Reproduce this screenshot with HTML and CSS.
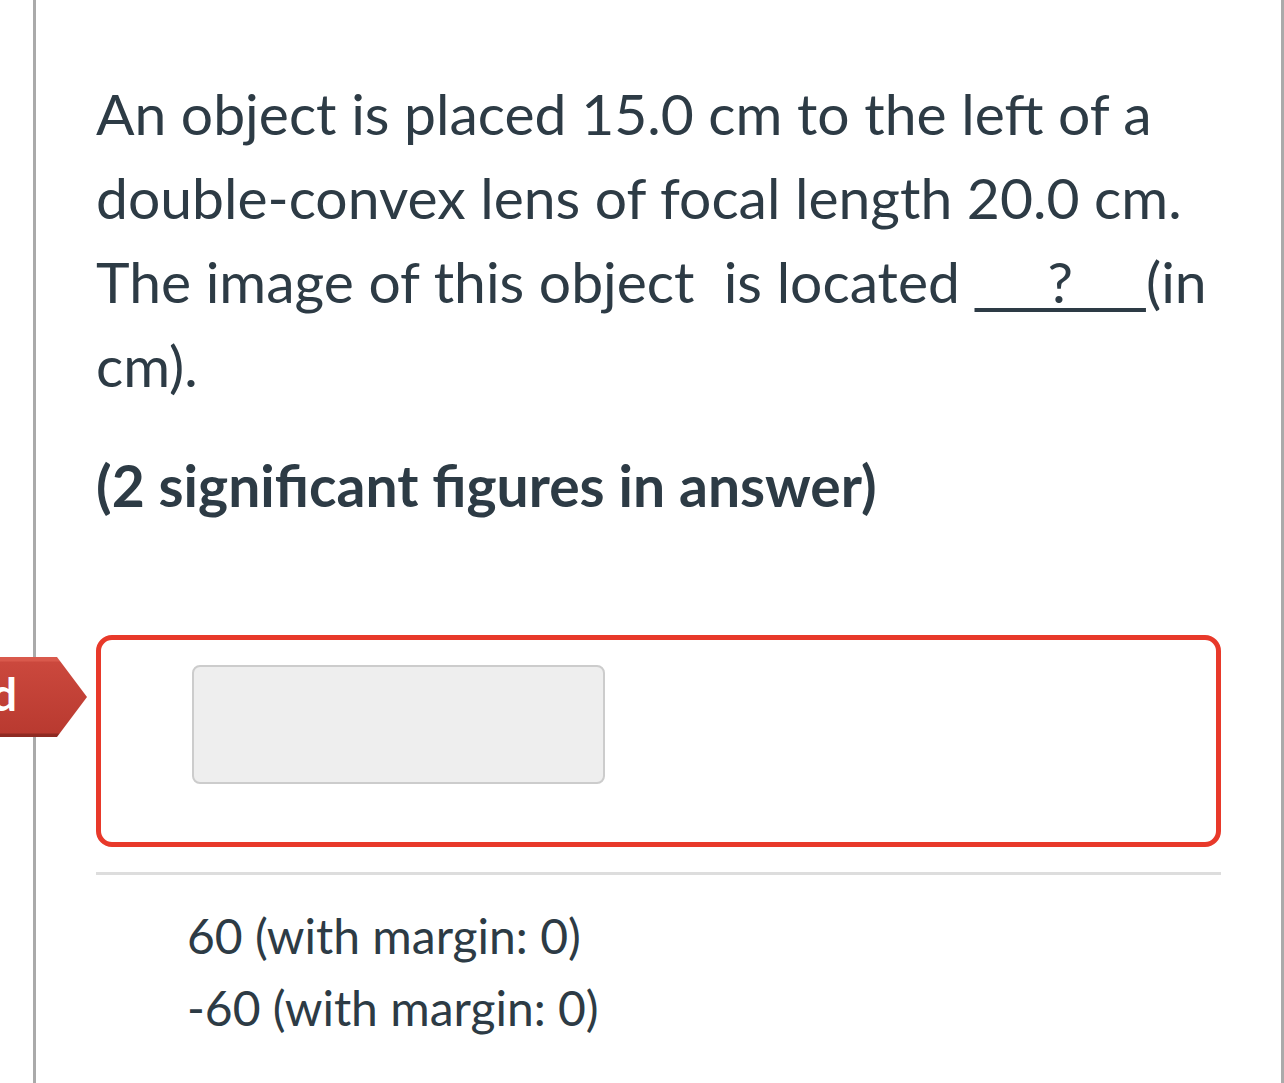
FILE: index.html
```html
<!DOCTYPE html>
<html>
<head>
<meta charset="utf-8">
<link rel="stylesheet" href="styles.css">
</head>
<body>
<div class="page">
  <div class="flag"><span class="flag-text">d</span></div>
  <div class="question">
    <p class="q-text">An object is placed 15.0 cm to the left of a double-convex lens of focal length 20.0 cm. The image of this object&nbsp; is located <span class="blank">&nbsp;&nbsp;&nbsp;&nbsp;&nbsp;?&nbsp;&nbsp;&nbsp;&nbsp;&nbsp;</span>(in cm).</p>
    <p class="q-note">(2 significant figures in answer)</p>
    <div class="answer-box">
      <div class="answer-input"></div>
    </div>
    <div class="divider"></div>
    <div class="answers">
      <div class="ans">60 (with margin: 0)</div>
      <div class="ans">-60 (with margin: 0)</div>
    </div>
  </div>
</div>
</body>
</html>
```
FILE: styles.css
```css
html, body {
  margin: 0;
  padding: 0;
  background: #fff;
}
body {
  font-family: Lato, "Open Sans", sans-serif;
  color: #2d3b45;
  overflow: hidden;
}
.page {
  position: relative;
  margin-left: 33px;
  width: 1245px;
  height: 1083px;
  border-left: 3px solid #aaaaaa;
  border-right: 3px solid #aaaaaa;
}
.flag {
  position: absolute;
  left: -36px;
  top: 657px;
  width: 87px;
  height: 80px;
  background: linear-gradient(#d9594c 0, #d9594c 4px, #cb483d 5px, #b93a30 76px, #8e2a22 77px);
  clip-path: polygon(0 0, 57px 0, 87px 40px, 57px 80px, 0 80px);
  overflow: hidden;
}
.flag-text {
  position: absolute;
  left: -9px;
  top: 14px;
  color: #fff;
  font-weight: 700;
  font-size: 46px;
  line-height: 1;
}
.question {
  padding: 71px 60px 0 60px;
}
.q-text {
  margin: 0;
  font-size: 57px;
  line-height: 84px;
}
.blank {
  text-decoration: underline;
  text-decoration-thickness: 4px;
  text-underline-offset: 5px;
}
.q-note {
  margin: 36px 0 0 0;
  font-size: 57px;
  line-height: 84px;
  font-weight: 700;
}
.answer-box {
  margin-top: 108px;
  border: 5px solid #e8392a;
  border-radius: 16px;
  padding: 25px 0 0 91px;
  box-sizing: border-box;
  height: 212px;
}
.answer-input {
  width: 413px;
  height: 119px;
  box-sizing: border-box;
  background: #eeeeee;
  border: 2px solid #cccccc;
  border-radius: 8px;
}
.divider {
  margin-top: 25px;
  height: 3px;
  background: #dddddd;
}
.answers {
  padding: 25px 0 0 91px;
}
.ans {
  font-size: 48px;
  line-height: 72px;
}
```
